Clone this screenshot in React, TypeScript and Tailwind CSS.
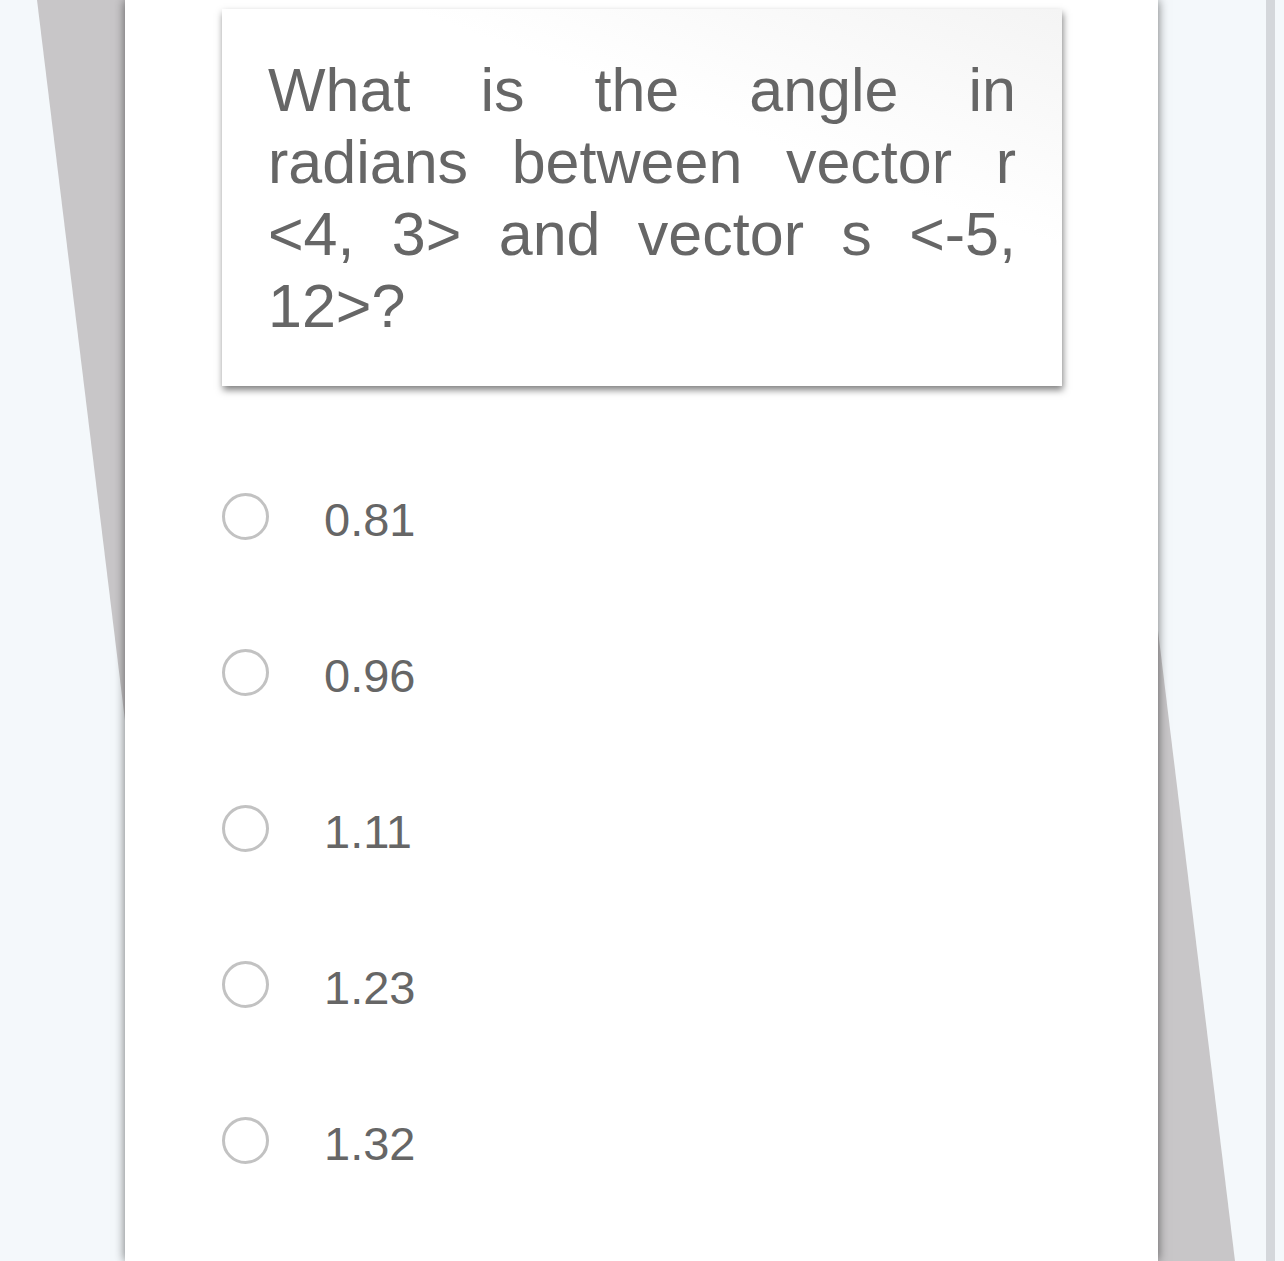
import React from "react";

const options = ["0.81", "0.96", "1.11", "1.23", "1.32"];
const lines = ["What is the angle in", "radians between vector r", "<4, 3> and vector s <-5,"];

export default function App() {
  return (
    <div className="relative w-[1284px] h-[1261px] overflow-hidden bg-[#f4f8fb] font-['Liberation_Sans',Arial,sans-serif]">
      <div className="absolute inset-0 bg-[#c8c6c8] [clip-path:polygon(37px_0px,1081px_0px,1235px_1261px,191px_1261px)]" />
      <div className="relative flex h-full">
        <div className="ml-[125px] w-[1033px] h-full bg-white shadow-[0_0_10px_rgba(0,0,0,0.55)] pl-[97px] pt-[9px]">
          <div className="w-[840px] bg-[linear-gradient(200deg,#f4f4f4_0%,#ffffff_35%,#ffffff_100%)] shadow-[1px_4px_7px_rgba(0,0,0,0.5)] pl-[46px] pr-[46px] pt-[45px] pb-[44px]">
            <div className="text-[61px] leading-[72px] text-[#666666]">
              {lines.map((l) => (
                <div key={l} className="text-justify [text-align-last:justify] whitespace-nowrap">
                  {l}
                </div>
              ))}
              <div>12&gt;?</div>
            </div>
          </div>
          <div className="mt-[52px] flex flex-col">
            {options.map((o) => (
              <div key={o} className="h-[156px] flex items-center">
                <div className="w-[47px] h-[47px] rounded-full border-[3px] border-[#c2c2c2] bg-white" />
                <span className="ml-[55px] mt-[6px] text-[47px] leading-none text-[#666666]">{o}</span>
              </div>
            ))}
          </div>
        </div>
        <div className="ml-[108px] w-[9px] h-full bg-[#d4d7db]" />
      </div>
    </div>
  );
}
